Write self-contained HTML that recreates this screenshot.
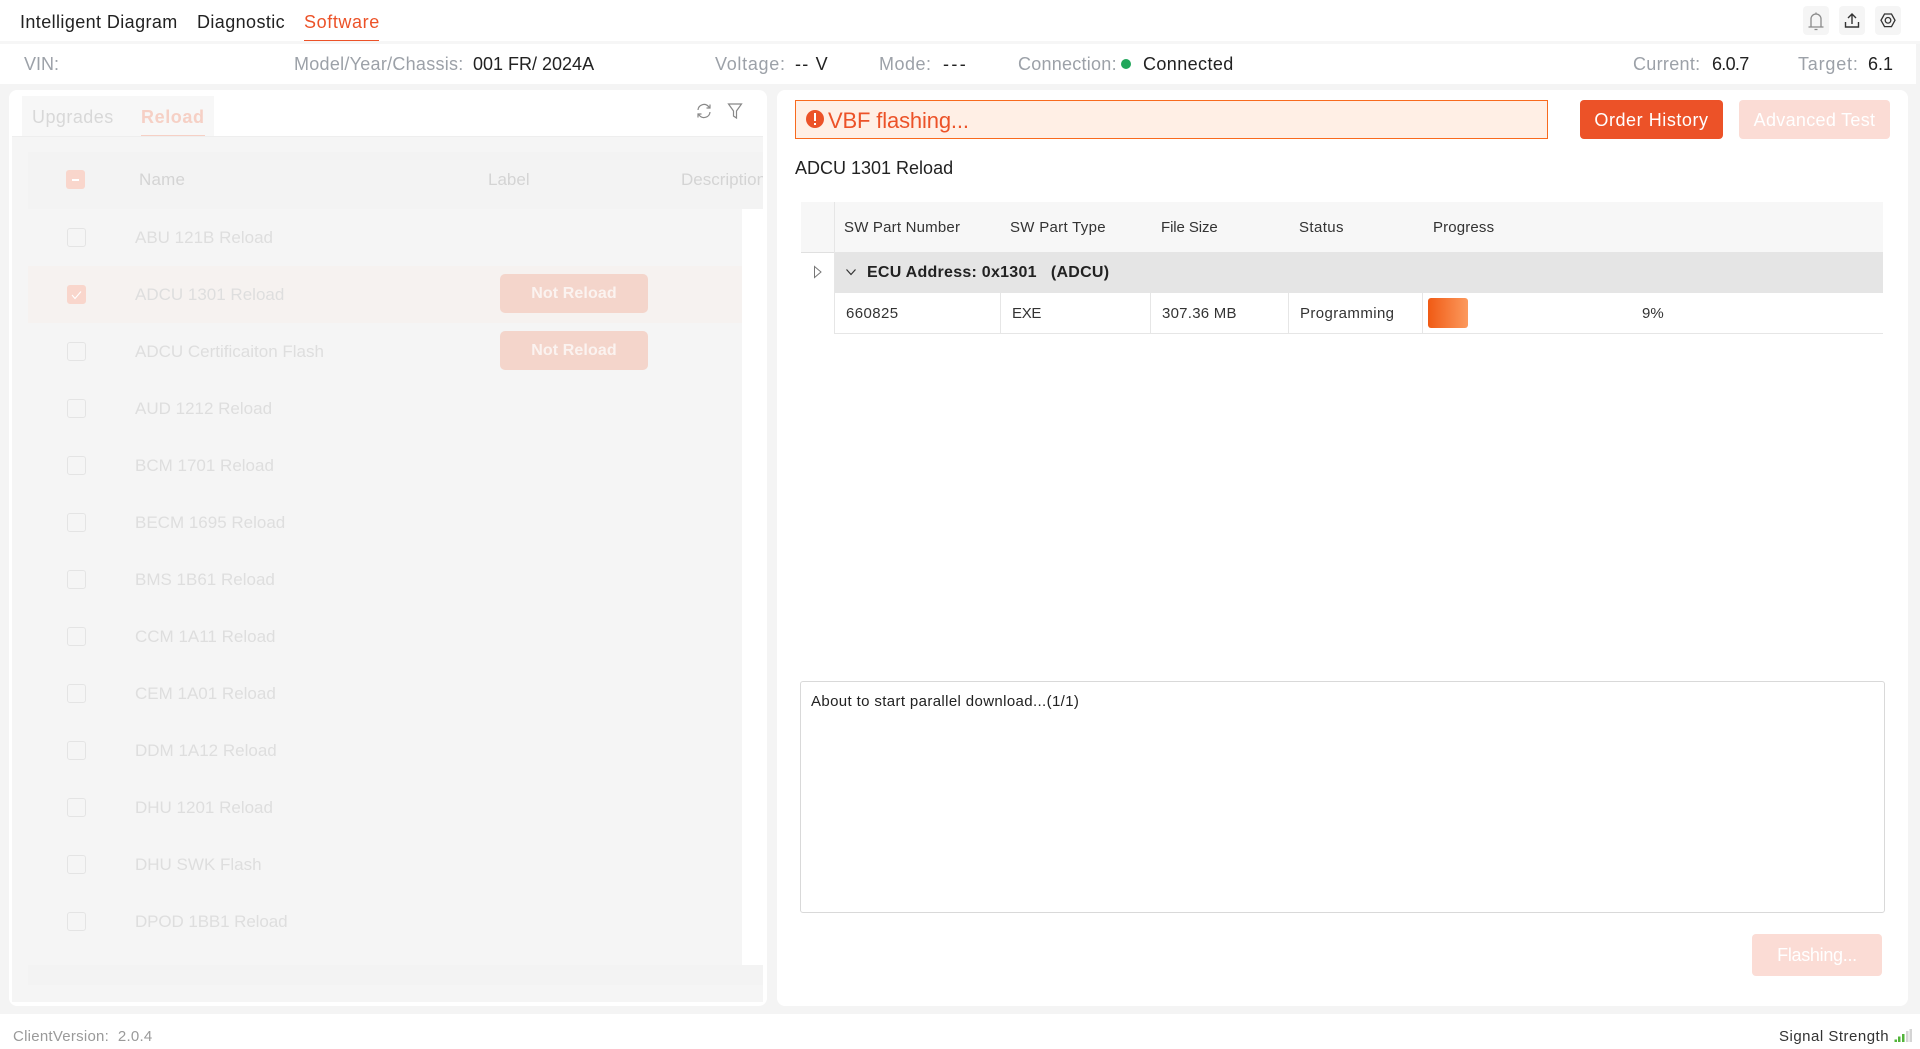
<!DOCTYPE html>
<html><head><meta charset="utf-8"><title>Software</title>
<style>
html,body{margin:0;padding:0;width:1920px;height:1049px;overflow:hidden;background:#f4f4f4;font-family:"Liberation Sans",sans-serif;}
.a{position:absolute;box-sizing:border-box;}
.t{position:absolute;white-space:nowrap;line-height:24px;height:24px;}
.lb{color:#9ca1a8;font-size:18px;top:52px}
.v{color:#222;font-size:18px;top:52px}
.nav{font-size:18px;top:10px;color:#222;letter-spacing:.4px}
.row{color:#dedede;font-size:17px;left:135px;margin-top:1px}
.cb{position:absolute;left:67px;width:19px;height:19px;border:1px solid #e4e4e4;border-radius:3px;box-sizing:border-box;}
.th{font-size:15px;color:#333;top:216px}
.td{font-size:15px;color:#333;top:302px}
.dv{position:absolute;top:293px;height:40px;width:1px;background:#e6e6e6}
.btn{position:absolute;border-radius:4px;color:#fff;text-align:center;}
.nr{position:absolute;left:500px;width:148px;height:39px;background:#f4d5cb;border-radius:5px;color:#fbf3f0;font-weight:bold;font-size:16px;line-height:39px;text-align:center;letter-spacing:.1px}
.ib{position:absolute;top:6px;width:26px;height:29px;background:#f5f5f5;border-radius:4px}
</style></head>
<body>
<!-- top bar -->
<div class="a" style="left:0;top:0;width:1920px;height:41px;background:#fff"></div>
<div class="a" style="left:0;top:41px;width:1920px;height:3px;background:#f6f6f6"></div>
<span class="t nav" style="left:20px">Intelligent Diagram</span>
<span class="t nav" style="left:197px">Diagnostic</span>
<span class="t nav" style="left:304px;color:#ec5228;letter-spacing:.6px">Software</span>
<div class="a" style="left:304px;top:40px;width:75px;height:1px;background:#ec5228"></div>
<div class="ib" style="left:1803px"><svg width="26" height="29" viewBox="0 0 26 29" fill="none" stroke="#8a8a8a" stroke-width="1.3"><path d="M8 20.5V13a5 5 0 0 1 10 0v7.5M5.500 21h15M11.500 23.500h3M13 6.500v1.500"/></svg></div>
<div class="ib" style="left:1839px"><svg width="26" height="29" viewBox="0 0 26 29" fill="none" stroke="#333" stroke-width="1.4"><path d="M6.500 16v5h13V16M13 18V8.500M9 12l4-4 4 4"/></svg></div>
<div class="ib" style="left:1875px"><svg width="26" height="29" viewBox="0 0 26 29" fill="none" stroke="#333" stroke-width="1.3"><path d="M9.500 8h7l3.500 6.300-3.500 6.300h-7L6 14.300z"/><circle cx="13" cy="14.300" r="2.800"/></svg></div>
<!-- info bar -->
<div class="a" style="left:0;top:44px;width:1916px;height:40px;background:#fff"></div>
<span class="t lb" style="left:24px">VIN:</span>
<span class="t lb" style="left:294px;letter-spacing:.27px">Model/Year/Chassis:</span>
<span class="t v" style="left:473px">001 FR/ 2024A</span>
<span class="t lb" style="left:715px;letter-spacing:.7px">Voltage:</span>
<span class="t v" style="left:795px;letter-spacing:1.2px">-- V</span>
<span class="t lb" style="left:879px;letter-spacing:.5px">Mode:</span>
<span class="t v" style="left:943px;letter-spacing:2.4px">---</span>
<span class="t lb" style="left:1018px;letter-spacing:.25px">Connection:</span>
<div class="a" style="left:1121px;top:59px;width:10px;height:10px;border-radius:50%;background:#20a65a"></div>
<span class="t v" style="left:1143px;letter-spacing:.4px">Connected</span>
<span class="t lb" style="left:1633px;letter-spacing:.3px">Current:</span>
<span class="t v" style="left:1712px;letter-spacing:-.7px">6.0.7</span>
<span class="t lb" style="left:1798px;letter-spacing:.8px">Target:</span>
<span class="t v" style="left:1868px">6.1</span>
<!-- left panel -->
<div class="a" style="left:9px;top:90px;width:758px;height:916px;background:#fff;border-radius:8px"></div>
<div class="a" style="left:22px;top:96px;width:192px;height:40px;background:#f7f7f7"></div>
<span class="t" style="left:32px;top:105px;font-size:18px;color:#d8d8d8;letter-spacing:.45px">Upgrades</span>
<span class="t" style="left:141px;top:105px;font-size:18px;color:#f6d0c5;font-weight:bold;letter-spacing:.6px">Reload</span>
<div class="a" style="left:141px;top:135px;width:64px;height:1px;background:#f6d0c5"></div>
<svg class="a" style="left:696px;top:102px" width="16" height="18" viewBox="0 0 16 18" fill="none" stroke="#888" stroke-width="1.2"><path d="M2 8a6 6 0 0 1 10.500-3.500L14 6M14 10a6 6 0 0 1-10.500 3.500L2 12M14 2.500V6h-3.500M2 15.500V12h3.500"/></svg>
<svg class="a" style="left:727px;top:102px" width="16" height="18" viewBox="0 0 16 18" fill="none" stroke="#888" stroke-width="1.2"><path d="M1.500 2h13L9.500 9v7l-3-2V9z"/></svg>
<div class="a" style="left:12px;top:136px;width:751px;height:866px;background:#f5f5f5;border-top:1px solid #eee"></div>
<div class="a" style="left:28px;top:152px;width:735px;height:57px;background:#f3f3f3"></div>
<div class="a" style="left:742px;top:209px;width:21px;height:756px;background:#fff"></div>
<div class="a" style="left:28px;top:965px;width:735px;height:20px;background:#f3f3f3"></div>
<div class="a" style="left:66px;top:170px;width:19px;height:19px;background:#f9d6cc;border-radius:3px"></div>
<div class="a" style="left:72px;top:179px;width:7px;height:2px;background:#fff"></div>
<span class="t" style="left:139px;top:168px;font-size:17px;color:#d4d4d4;letter-spacing:.2px">Name</span>
<span class="t" style="left:488px;top:168px;font-size:17px;color:#d4d4d4">Label</span>
<div class="a" style="left:681px;top:168px;width:82px;height:24px;overflow:hidden"><span class="t" style="left:0;top:0;font-size:17px;color:#d4d4d4">Description</span></div>
<div class="a" style="left:28px;top:266px;width:714px;height:57px;background:#f6f2f0"></div>
<div class="cb" style="top:228px"></div><span class="t row" style="top:225px">ABU 121B Reload</span>
<div class="cb" style="top:285px;background:#f9d6cc;border-color:#f9d6cc"></div><svg class="a" style="left:69px;top:288px" width="15" height="14" viewBox="0 0 15 14" fill="none" stroke="#fff" stroke-width="1.1"><path d="M3 7l3 3.500 6-7"/></svg><span class="t row" style="top:282px">ADCU 1301 Reload</span><div class="nr" style="top:274px">Not Reload</div>
<div class="cb" style="top:342px"></div><span class="t row" style="top:339px">ADCU Certificaiton Flash</span><div class="nr" style="top:331px">Not Reload</div>
<div class="cb" style="top:399px"></div><span class="t row" style="top:396px">AUD 1212 Reload</span>
<div class="cb" style="top:456px"></div><span class="t row" style="top:453px">BCM 1701 Reload</span>
<div class="cb" style="top:513px"></div><span class="t row" style="top:510px">BECM 1695 Reload</span>
<div class="cb" style="top:570px"></div><span class="t row" style="top:567px">BMS 1B61 Reload</span>
<div class="cb" style="top:627px"></div><span class="t row" style="top:624px">CCM 1A11 Reload</span>
<div class="cb" style="top:684px"></div><span class="t row" style="top:681px">CEM 1A01 Reload</span>
<div class="cb" style="top:741px"></div><span class="t row" style="top:738px">DDM 1A12 Reload</span>
<div class="cb" style="top:798px"></div><span class="t row" style="top:795px">DHU 1201 Reload</span>
<div class="cb" style="top:855px"></div><span class="t row" style="top:852px">DHU SWK Flash</span>
<div class="cb" style="top:912px"></div><span class="t row" style="top:909px;letter-spacing:-.1px">DPOD 1BB1 Reload</span>
<!-- right panel -->
<div class="a" style="left:777px;top:90px;width:1131px;height:916px;background:#fff;border-radius:8px"></div>
<div class="a" style="left:795px;top:100px;width:753px;height:39px;background:#ffefe5;border:1px solid #f86a1e"></div>
<div class="a" style="left:806px;top:110px;width:18px;height:18px;border-radius:50%;background:#ec5228"></div>
<div class="a" style="left:814px;top:113px;width:2px;height:8px;background:#fff"></div>
<div class="a" style="left:814px;top:123px;width:2px;height:2px;background:#fff"></div>
<span class="t" style="left:828px;top:109px;font-size:22px;color:#ec5228;letter-spacing:-.15px">VBF flashing...</span>
<div class="btn" style="left:1580px;top:100px;width:143px;height:39px;background:#ec5228;font-size:18px;line-height:40px;letter-spacing:.55px">Order History</div>
<div class="btn" style="left:1739px;top:100px;width:151px;height:39px;background:#fbdcd5;font-size:18px;line-height:40px;letter-spacing:.3px">Advanced Test</div>
<span class="t" style="left:795px;top:156px;font-size:18px;color:#222">ADCU 1301 Reload</span>
<div class="a" style="left:801px;top:202px;width:1082px;height:50px;background:#f7f7f7"></div>
<div class="a" style="left:801px;top:252px;width:33px;height:1px;background:#e0e0e0"></div>
<div class="a" style="left:834px;top:202px;width:1px;height:132px;background:#e6e6e6"></div>
<span class="t th" style="left:844px;letter-spacing:.2px">SW Part Number</span>
<span class="t th" style="left:1010px;letter-spacing:.3px">SW Part Type</span>
<span class="t th" style="left:1161px;letter-spacing:-.1px">File Size</span>
<span class="t th" style="left:1299px;letter-spacing:.4px">Status</span>
<span class="t th" style="left:1433px;letter-spacing:.15px">Progress</span>
<svg class="a" style="left:813px;top:265px" width="10" height="14" viewBox="0 0 10 14" fill="none" stroke="#777" stroke-width="1"><path d="M1.500 1.500l6.500 5.500-6.500 5.500z"/></svg>
<div class="a" style="left:835px;top:252px;width:1048px;height:41px;background:#e5e5e5"></div>
<svg class="a" style="left:845px;top:268px" width="12" height="9" viewBox="0 0 12 9" fill="none" stroke="#333" stroke-width="1.2"><path d="M1.500 1.500L6 6.500l4.500-5"/></svg>
<span class="t" style="left:867px;top:261px;font-size:16px;font-weight:bold;color:#222;white-space:pre;letter-spacing:.26px">ECU Address: 0x1301   (ADCU)</span>
<div class="a" style="left:835px;top:333px;width:1048px;height:1px;background:#e6e6e6"></div>
<div class="dv" style="left:1000px"></div><div class="dv" style="left:1150px"></div><div class="dv" style="left:1288px"></div><div class="dv" style="left:1422px"></div>
<span class="t td" style="left:846px;letter-spacing:.4px">660825</span>
<span class="t td" style="left:1012px;letter-spacing:-.3px">EXE</span>
<span class="t td" style="left:1162px;letter-spacing:.25px">307.36 MB</span>
<span class="t td" style="left:1300px;letter-spacing:.4px">Programming</span>
<div class="a" style="left:1428px;top:298px;width:40px;height:30px;border-radius:3px;background:linear-gradient(90deg,#f05a14,#fc9a5e)"></div>
<span class="t td" style="left:1642px">9%</span>
<div class="a" style="left:800px;top:681px;width:1085px;height:232px;border:1px solid #d9d9d9;border-radius:3px"></div>
<span class="t" style="left:811px;top:690px;font-size:15px;color:#222;letter-spacing:.37px">About to start parallel download...(1/1)</span>
<div class="btn" style="left:1752px;top:934px;width:130px;height:42px;background:#fbdcd5;font-size:18px;line-height:42px;letter-spacing:-.3px">Flashing...</div>
<!-- status bar -->
<div class="a" style="left:0;top:1014px;width:1920px;height:35px;background:#fff"></div>
<span class="t" style="left:13px;top:1025px;font-size:15px;color:#9a9a9a;letter-spacing:.25px">ClientVersion:&nbsp; 2.0.4</span>
<span class="t" style="left:1779px;top:1025px;font-size:15px;color:#333;letter-spacing:.5px">Signal Strength</span>
<svg class="a" style="left:1894px;top:1029px" width="19" height="14" viewBox="0 0 19 14"><rect x="0.500" y="10.500" width="2.500" height="2.500" fill="#52b43a"/><rect x="4" y="7.500" width="2.500" height="5.500" fill="#52b43a"/><rect x="8" y="5" width="2.500" height="8" fill="#52b43a"/><rect x="12" y="2" width="2.500" height="11" fill="#d4d4d4"/><rect x="15.500" y="0" width="2.500" height="13" fill="#d4d4d4"/></svg>
</body></html>
